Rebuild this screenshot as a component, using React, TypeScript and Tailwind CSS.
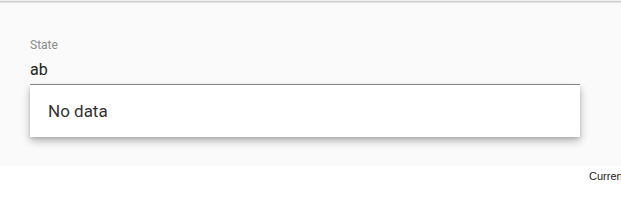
import React from "react";

export default function App() {
  return (
    <div className="w-[621px] h-[223px] bg-white overflow-hidden" style={{ fontFamily: "Roboto, 'Liberation Sans', Arial, sans-serif" }}>
      <div className="h-[1px] bg-[#eeeeee]" />
      <div className="h-[1px] bg-[#cfcfcf]" />
      <div className="h-[1px] bg-[#e2e2e2]" />
      <div className="bg-[#fafafa] h-[163px] pt-[35px] pl-[30px] pr-[41px]">
        <div className="relative">
          <div className="text-[12px] leading-[14px] text-[#8a8a8a]">State</div>
          <div className="mt-[8px] text-[16px] leading-[20px] text-[#222] border-b border-[#8c8c8c] pb-[4px]">ab</div>
          <div className="absolute left-0 right-0 top-[47px] h-[52px] bg-white shadow-[0_4px_8px_rgba(0,0,0,0.28),0_1px_3px_rgba(0,0,0,0.12)] flex items-center pl-[18px] pt-[2px]">
            <span className="text-[17px] text-[#333]">No data</span>
          </div>
        </div>
      </div>
      <div className="flex justify-start pl-[589px] pt-[3px]">
        <span className="text-[11px] leading-[14px] text-[#222] whitespace-nowrap" style={{ fontFamily: "'Liberation Sans', Arial, sans-serif" }}>Current</span>
      </div>
    </div>
  );
}
